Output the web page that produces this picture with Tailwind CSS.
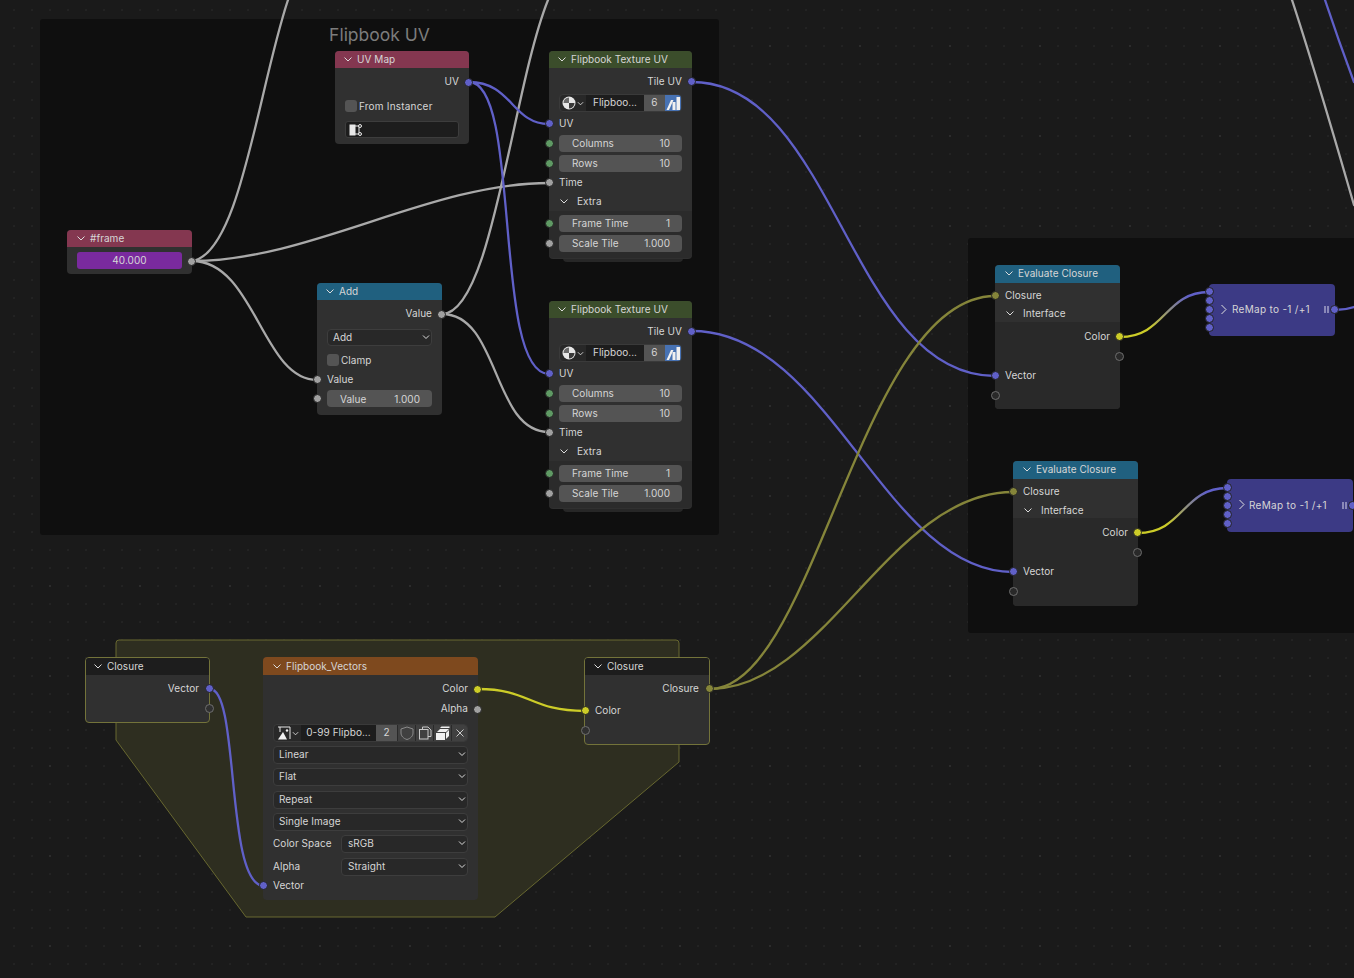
<!DOCTYPE html>
<html>
<head>
<meta charset="utf-8">
<script src="https://cdn.jsdelivr.net/npm/@tailwindcss/browser@4"></script>
</head>
<body class="bg-[#1a1a1a]">
<main class="relative w-[1354px] h-[978px] overflow-hidden bg-[#1a1a1a] [font-family:Inter,sans-serif] text-[10px] leading-none tracking-[0.05px] text-[#d6d6d6]">
  <div class="absolute inset-0 bg-[radial-gradient(#2c2c2c_1px,transparent_1.2px),radial-gradient(#232323_0.7px,transparent_0.9px)] bg-[size:90px_90px,18px_18px] bg-[position:5px_1px,5px_1px]"></div>

  <!-- frames -->
  <section class="absolute left-[40px] top-[19px] w-[679px] h-[516px] rounded-[3px] bg-[#0f0f0f]">
    <h2 class="text-center text-[17.5px] tracking-normal text-[#7c7c7c] pt-[7px]">Flipbook UV</h2>
  </section>
  <section class="absolute left-[968px] top-[238px] w-[400px] h-[395px] rounded-[3px] bg-[#0f0f0f]"></section>

  <!-- zone + wires -->
  <svg class="absolute inset-0" width="1354" height="978" viewBox="0 0 1354 978" fill="none">
    <defs>
      <linearGradient id="g1" gradientUnits="userSpaceOnUse" x1="1120" y1="337" x2="1209" y2="292"><stop offset="0.3" stop-color="#cccc28"/><stop offset="0.55" stop-color="#8f8f80"/><stop offset="0.8" stop-color="#6060c8"/></linearGradient>
      <linearGradient id="g2" gradientUnits="userSpaceOnUse" x1="1138" y1="533" x2="1227" y2="488"><stop offset="0.3" stop-color="#cccc28"/><stop offset="0.55" stop-color="#8f8f80"/><stop offset="0.8" stop-color="#6060c8"/></linearGradient>
    </defs>
    <path d="M119 640H676Q679 640 679 643V762L495 917H246L116 740V643Q116 640 119 640Z" fill="#2e2e20" stroke="#686830" stroke-width="1"/>
    <g stroke-width="2.300" stroke-linecap="round">
      <g stroke="#a9a9a9">
        <path d="M192 261C240 254 258 90 288 0"/>
        <path d="M192 261C310 261 430 183 549 183"/>
        <path d="M192 261C255 261 262 380 317 380"/>
        <path d="M442 314C492 314 512 90 548 0"/>
        <path d="M442 314C500 314 492 432 549 432"/>
        <path d="M1292 0C1315 70 1335 140 1354 205"/>
      </g>
      <g stroke="#6060c8">
        <path d="M469 82C512 82 512 124 549 124"/>
        <path d="M469 82C522 82 492 374 549 374"/>
        <path d="M692 82C835 82 850 376 995 376"/>
        <path d="M692 331C830 331 885 572 1013 572"/>
        <path d="M210 689C240 689 225 886 264 886"/>
        <path d="M1325 0C1335 30 1345 58 1354 82"/>
        <path d="M1335 310C1342 310 1348 309 1354 307"/>
      </g>
      <g stroke="#85853a">
        <path d="M710 689C815 689 860 296 995 296"/>
        <path d="M710 689C825 689 890 492 1013 492"/>
      </g>
      <path d="M478 689C530 689 530 711 585 711" stroke="#cccc28"/>
      <path d="M1120 337C1165 337 1165 292 1209 292" stroke="url(#g1)"/>
      <path d="M1138 533C1183 533 1183 488 1227 488" stroke="url(#g2)"/>
    </g>
  </svg>

  <!-- #frame -->
  <article class="absolute left-[67px] top-[230px] w-[125px] h-[44px] rounded-[4px] bg-[#303030]">
    <header class="flex items-center gap-[4px] h-[17px] pb-[2px] pl-[9px] rounded-t-[4px] bg-[#843750]">
      <svg width="10" height="10" viewBox="0 0 10 10" fill="none" stroke="#dcdcdc"><path d="M1.5 3.5 5 7l3.5-3.5"/></svg>#frame
    </header>
    <div class="relative mx-[10px] mt-[5px] h-[17px] pb-[2px] flex items-center justify-center rounded-[3px] bg-[#7a2a9e]">40.000</div>
    <span class="absolute right-[-4px] top-[27px] w-[9px] h-[9px] rounded-full bg-[#a1a1a1] border border-[#222]"></span>
  </article>

  <!-- UV Map -->
  <article class="absolute left-[335px] top-[51px] w-[134px] h-[93px] rounded-[4px] bg-[#303030]">
    <header class="flex items-center gap-[4px] h-[17px] pb-[2px] pl-[8px] rounded-t-[4px] bg-[#843750]">
      <svg width="10" height="10" viewBox="0 0 10 10" fill="none" stroke="#dcdcdc"><path d="M1.5 3.5 5 7l3.5-3.5"/></svg>UV Map
    </header>
    <div class="relative h-[20px] mt-[4px] pb-[2px] flex items-center justify-end pr-[10px]">UV<span class="absolute right-[-4px] top-[6px] w-[9px] h-[9px] rounded-full bg-[#6060c8] border border-[#222]"></span></div>
    <div class="flex items-center gap-[2px] h-[18px] mt-[5px] pl-[10px] tracking-[0.2px]"><span class="w-[12px] h-[12px] rounded-[3px] bg-[#545454]"></span>From Instancer</div>
    <div class="flex items-center mx-[10px] mt-[6px] h-[17px] pl-[3px] rounded-[3px] bg-[#1d1d1d] border border-[#3d3d3d]">
      <svg width="14" height="14" viewBox="0 0 14 14" fill="none" stroke="#e8e8e8"><path d="M2 3h8M10 3v8M2 11h8"/><rect x="1" y="2" width="5" height="10" fill="#e8e8e8"/><circle cx="11" cy="3" r="1.5" fill="#303030"/><circle cx="11" cy="11" r="1.5" fill="#303030"/></svg>
    </div>
  </article>

  <!-- Flipbook Texture UV 1 -->
  <article class="absolute left-[549px] top-[51px] w-[143px] h-[211px]">
    <div class="absolute left-[14px] right-[9px] top-[200px] h-[11px] rounded-[4px] bg-[#272727]"></div>
    <div class="relative h-[208px] rounded-[4px] bg-[#303030]">
      <header class="flex items-center gap-[4px] h-[17px] pb-[2px] pl-[8px] rounded-t-[4px] bg-[#3b4d2b]">
        <svg width="10" height="10" viewBox="0 0 10 10" fill="none" stroke="#dcdcdc"><path d="M1.5 3.5 5 7l3.5-3.5"/></svg>Flipbook Texture UV
      </header>
      <div class="relative h-[20px] mt-[3px] flex items-center justify-end pr-[10px]">Tile UV<span class="absolute right-[-4px] top-[6px] w-[9px] h-[9px] rounded-full bg-[#6060c8] border border-[#222]"></span></div>
      <div class="flex items-center mx-[10px] mt-[3px] h-[18px] rounded-[4px] overflow-hidden bg-[#282828] border border-[#3a3a3a]">
        <span class="flex items-center justify-center gap-[1px] w-[26px] h-full">
          <svg width="14" height="14" viewBox="0 0 14 14"><circle cx="7" cy="7" r="6.500" fill="#e6e6e6"/><path d="M7 1.500A5.500 5.500 0 0 0 1.500 7H7Z" fill="#6a6a6a"/><path d="M7 7H12.500A5.500 5.500 0 0 1 7 12.500Z" fill="#3a3a3a"/></svg>
          <svg width="7" height="7" viewBox="0 0 8 8" fill="none" stroke="#dcdcdc"><path d="M1 2.5 4 5.5l3-3"/></svg>
        </span>
        <span class="flex items-center justify-center w-[58px] h-full pb-[2px] bg-[#1d1d1d]">Flipboo...</span>
        <span class="flex items-center justify-center w-[21px] h-full pb-[2px] bg-[#545454]">6</span>
        <span class="flex items-center justify-center flex-1 h-full bg-[#4772b3]">
          <svg width="16" height="16" viewBox="0 0 16 16" fill="#f0f0f0"><path d="M1.500 15 6 5H8.500L4 15Z"/><rect x="7.500" y="7" width="3" height="8"/><rect x="11.500" y="2" width="3.500" height="13"/></svg>
        </span>
      </div>
      <div class="relative h-[20px] mt-[1px] flex items-center pl-[10px]">UV<span class="absolute left-[-4px] top-[6px] w-[9px] h-[9px] rounded-full bg-[#6060c8] border border-[#222]"></span></div>
      <div class="relative h-[20px] flex items-center px-[10px]"><span class="flex justify-between items-center w-full h-[17px] pl-[13px] pr-[12px] rounded-[4px] bg-[#545454]"><span>Columns</span><span>10</span></span><span class="absolute left-[-4px] top-[6px] w-[9px] h-[9px] rounded-full bg-[#5f9a64] border border-[#222]"></span></div>
      <div class="relative h-[20px] flex items-center px-[10px]"><span class="flex justify-between items-center w-full h-[17px] pl-[13px] pr-[12px] rounded-[4px] bg-[#545454]"><span>Rows</span><span>10</span></span><span class="absolute left-[-4px] top-[6px] w-[9px] h-[9px] rounded-full bg-[#5f9a64] border border-[#222]"></span></div>
      <div class="relative h-[19px] pb-[2px] flex items-center pl-[10px]">Time<span class="absolute left-[-4px] top-[5px] w-[9px] h-[9px] rounded-full bg-[#a1a1a1] border border-[#222]"></span></div>
      <div class="flex items-center gap-[8px] h-[19px] pb-[2px] pl-[10px]"><svg width="10" height="10" viewBox="0 0 10 10" fill="none" stroke="#dcdcdc"><path d="M1.5 3.5 5 7l3.5-3.5"/></svg>Extra</div>
      <div class="h-[47px] pt-[2px] rounded-b-[4px] bg-[#2b2b2b]">
        <div class="relative h-[20px] flex items-center px-[10px]"><span class="flex justify-between items-center w-full h-[17px] pl-[13px] pr-[12px] rounded-[4px] bg-[#545454]"><span>Frame Time</span><span>1</span></span><span class="absolute left-[-4px] top-[6px] w-[9px] h-[9px] rounded-full bg-[#5f9a64] border border-[#222]"></span></div>
        <div class="relative h-[20px] flex items-center px-[10px]"><span class="flex justify-between items-center w-full h-[17px] pl-[13px] pr-[12px] rounded-[4px] bg-[#545454]"><span>Scale Tile</span><span>1.000</span></span><span class="absolute left-[-4px] top-[6px] w-[9px] h-[9px] rounded-full bg-[#a1a1a1] border border-[#222]"></span></div>
      </div>
    </div>
  </article>

  <!-- Flipbook Texture UV 2 -->
  <article class="absolute left-[549px] top-[301px] w-[143px] h-[211px]">
    <div class="absolute left-[14px] right-[9px] top-[200px] h-[11px] rounded-[4px] bg-[#272727]"></div>
    <div class="relative h-[208px] rounded-[4px] bg-[#303030]">
      <header class="flex items-center gap-[4px] h-[17px] pb-[2px] pl-[8px] rounded-t-[4px] bg-[#3b4d2b]">
        <svg width="10" height="10" viewBox="0 0 10 10" fill="none" stroke="#dcdcdc"><path d="M1.5 3.5 5 7l3.5-3.5"/></svg>Flipbook Texture UV
      </header>
      <div class="relative h-[20px] mt-[3px] flex items-center justify-end pr-[10px]">Tile UV<span class="absolute right-[-4px] top-[6px] w-[9px] h-[9px] rounded-full bg-[#6060c8] border border-[#222]"></span></div>
      <div class="flex items-center mx-[10px] mt-[3px] h-[18px] rounded-[4px] overflow-hidden bg-[#282828] border border-[#3a3a3a]">
        <span class="flex items-center justify-center gap-[1px] w-[26px] h-full">
          <svg width="14" height="14" viewBox="0 0 14 14"><circle cx="7" cy="7" r="6.500" fill="#e6e6e6"/><path d="M7 1.500A5.500 5.500 0 0 0 1.500 7H7Z" fill="#6a6a6a"/><path d="M7 7H12.500A5.500 5.500 0 0 1 7 12.500Z" fill="#3a3a3a"/></svg>
          <svg width="7" height="7" viewBox="0 0 8 8" fill="none" stroke="#dcdcdc"><path d="M1 2.5 4 5.5l3-3"/></svg>
        </span>
        <span class="flex items-center justify-center w-[58px] h-full pb-[2px] bg-[#1d1d1d]">Flipboo...</span>
        <span class="flex items-center justify-center w-[21px] h-full pb-[2px] bg-[#545454]">6</span>
        <span class="flex items-center justify-center flex-1 h-full bg-[#4772b3]">
          <svg width="16" height="16" viewBox="0 0 16 16" fill="#f0f0f0"><path d="M1.500 15 6 5H8.500L4 15Z"/><rect x="7.500" y="7" width="3" height="8"/><rect x="11.500" y="2" width="3.500" height="13"/></svg>
        </span>
      </div>
      <div class="relative h-[20px] mt-[1px] flex items-center pl-[10px]">UV<span class="absolute left-[-4px] top-[6px] w-[9px] h-[9px] rounded-full bg-[#6060c8] border border-[#222]"></span></div>
      <div class="relative h-[20px] flex items-center px-[10px]"><span class="flex justify-between items-center w-full h-[17px] pl-[13px] pr-[12px] rounded-[4px] bg-[#545454]"><span>Columns</span><span>10</span></span><span class="absolute left-[-4px] top-[6px] w-[9px] h-[9px] rounded-full bg-[#5f9a64] border border-[#222]"></span></div>
      <div class="relative h-[20px] flex items-center px-[10px]"><span class="flex justify-between items-center w-full h-[17px] pl-[13px] pr-[12px] rounded-[4px] bg-[#545454]"><span>Rows</span><span>10</span></span><span class="absolute left-[-4px] top-[6px] w-[9px] h-[9px] rounded-full bg-[#5f9a64] border border-[#222]"></span></div>
      <div class="relative h-[19px] pb-[2px] flex items-center pl-[10px]">Time<span class="absolute left-[-4px] top-[5px] w-[9px] h-[9px] rounded-full bg-[#a1a1a1] border border-[#222]"></span></div>
      <div class="flex items-center gap-[8px] h-[19px] pb-[2px] pl-[10px]"><svg width="10" height="10" viewBox="0 0 10 10" fill="none" stroke="#dcdcdc"><path d="M1.5 3.5 5 7l3.5-3.5"/></svg>Extra</div>
      <div class="h-[47px] pt-[2px] rounded-b-[4px] bg-[#2b2b2b]">
        <div class="relative h-[20px] flex items-center px-[10px]"><span class="flex justify-between items-center w-full h-[17px] pl-[13px] pr-[12px] rounded-[4px] bg-[#545454]"><span>Frame Time</span><span>1</span></span><span class="absolute left-[-4px] top-[6px] w-[9px] h-[9px] rounded-full bg-[#5f9a64] border border-[#222]"></span></div>
        <div class="relative h-[20px] flex items-center px-[10px]"><span class="flex justify-between items-center w-full h-[17px] pl-[13px] pr-[12px] rounded-[4px] bg-[#545454]"><span>Scale Tile</span><span>1.000</span></span><span class="absolute left-[-4px] top-[6px] w-[9px] h-[9px] rounded-full bg-[#a1a1a1] border border-[#222]"></span></div>
      </div>
    </div>
  </article>

  <!-- Add -->
  <article class="absolute left-[317px] top-[283px] w-[125px] h-[132px] rounded-[4px] bg-[#303030]">
    <header class="flex items-center gap-[4px] h-[17px] pb-[2px] pl-[8px] rounded-t-[4px] bg-[#20607f]">
      <svg width="10" height="10" viewBox="0 0 10 10" fill="none" stroke="#dcdcdc"><path d="M1.5 3.5 5 7l3.5-3.5"/></svg>Add
    </header>
    <div class="relative h-[20px] mt-[4px] pb-[2px] flex items-center justify-end pr-[10px]">Value<span class="absolute right-[-4px] top-[6px] w-[9px] h-[9px] rounded-full bg-[#a1a1a1] border border-[#222]"></span></div>
    <div class="flex items-center justify-between mx-[10px] mt-[5px] h-[17px] pb-[2px] pl-[5px] pr-[1px] rounded-[4px] bg-[#282828] border border-[#3d3d3d]">Add<svg width="8" height="8" viewBox="0 0 8 8" fill="none" stroke="#dcdcdc"><path d="M1 2.5 4 5.5l3-3"/></svg></div>
    <div class="flex items-center gap-[2px] h-[18px] mt-[5px] pl-[10px]"><span class="w-[12px] h-[12px] rounded-[3px] bg-[#545454]"></span>Clamp</div>
    <div class="relative h-[20px] flex items-center pl-[10px]">Value<span class="absolute left-[-4px] top-[6px] w-[9px] h-[9px] rounded-full bg-[#a1a1a1] border border-[#222]"></span></div>
    <div class="relative h-[19px] flex items-center px-[10px]"><span class="flex justify-between items-center w-full h-[17px] pl-[13px] pr-[12px] rounded-[4px] bg-[#545454]"><span>Value</span><span>1.000</span></span><span class="absolute left-[-4px] top-[5px] w-[9px] h-[9px] rounded-full bg-[#a1a1a1] border border-[#222]"></span></div>
  </article>

  <!-- Closure input -->
  <article class="absolute left-[85px] top-[657px] w-[125px] h-[66px] rounded-[4px] bg-[#303030] border border-[#73733a]">
    <header class="flex items-center gap-[4px] h-[17px] pb-[2px] pl-[7px] rounded-t-[3px] bg-[#1d1d1d]">
      <svg width="10" height="10" viewBox="0 0 10 10" fill="none" stroke="#dcdcdc"><path d="M1.5 3.5 5 7l3.5-3.5"/></svg>Closure
    </header>
    <div class="relative h-[20px] mt-[3px] flex items-center justify-end pr-[10px]">Vector<span class="absolute right-[-5px] top-[6px] w-[9px] h-[9px] rounded-full bg-[#6060c8] border border-[#222]"></span></div>
    <div class="relative h-[20px]"><span class="absolute right-[-5px] top-[6px] w-[9px] h-[9px] rounded-full bg-[#303030] border border-[#6e6e6e]"></span></div>
  </article>

  <!-- Flipbook_Vectors -->
  <article class="absolute left-[263px] top-[657px] w-[215px] h-[243px] rounded-[4px] bg-[#303030]">
    <header class="flex items-center gap-[4px] h-[18px] pl-[9px] rounded-t-[4px] bg-[#7e491e]">
      <svg width="10" height="10" viewBox="0 0 10 10" fill="none" stroke="#dcdcdc"><path d="M1.5 3.5 5 7l3.5-3.5"/></svg>Flipbook_Vectors
    </header>
    <div class="relative h-[20px] mt-[4px] pb-[2px] flex items-center justify-end pr-[10px]">Color<span class="absolute right-[-4px] top-[6px] w-[9px] h-[9px] rounded-full bg-[#cccc28] border border-[#222]"></span></div>
    <div class="relative h-[20px] pb-[2px] flex items-center justify-end pr-[10px]">Alpha<span class="absolute right-[-4px] top-[6px] w-[9px] h-[9px] rounded-full bg-[#a1a1a1] border border-[#222]"></span></div>
    <div class="flex items-center mx-[10px] mt-[5px] h-[18px] rounded-[4px] overflow-hidden bg-[#282828] border border-[#3a3a3a]">
      <span class="flex items-center justify-center gap-[1px] w-[27px] h-full">
        <svg width="14" height="14" viewBox="0 0 14 14" fill="none"><path d="M3 1H13V13" stroke="#e6e6e6"/><path d="M1 13.500 6 6l4 7.500Z" fill="#f0f0f0"/><circle cx="10" cy="4.500" r="1.200" fill="#f0f0f0"/><path d="M1 1H3V6" stroke="#e6e6e6"/></svg>
        <svg width="7" height="7" viewBox="0 0 8 8" fill="none" stroke="#dcdcdc"><path d="M1 2.5 4 5.5l3-3"/></svg>
      </span>
      <span class="flex items-center justify-center w-[75px] h-full pb-[2px] bg-[#1d1d1d]">0-99 Flipbo...</span>
      <span class="flex items-center justify-center w-[21px] h-full pb-[2px] bg-[#545454]">2</span>
      <span class="flex items-center justify-center w-[18px] h-full bg-[#404040] border-l border-[#2a2a2a]"><svg width="14" height="14" viewBox="0 0 14 14" fill="none" stroke="#8a8a8a"><path d="M7 1 13 3V7C13 10 10.500 12.500 7 13.500 3.500 12.500 1 10 1 7V3Z"/></svg></span>
      <span class="flex items-center justify-center w-[18px] h-full bg-[#404040] border-l border-[#2a2a2a]"><svg width="14" height="14" viewBox="0 0 14 14" fill="none" stroke="#c8c8c8"><path d="M4.500 3.500V1H10L13 4V10.500H10"/><rect x="1.500" y="3.500" width="8.500" height="9.500"/></svg></span>
      <span class="flex items-center justify-center w-[18px] h-full bg-[#404040] border-l border-[#2a2a2a]"><svg width="15" height="15" viewBox="0 0 15 15" fill="#f0f0f0"><path d="M1 7H10V14H1Z"/><path d="M2 6 5 3H14L11 6Z"/><path d="M5 2 6.500 .5H14.500V2Z"/><path d="M11 7 14 4V10L11 13Z"/></svg></span>
      <span class="flex items-center justify-center flex-1 h-full bg-[#404040] border-l border-[#2a2a2a]"><svg width="10" height="10" viewBox="0 0 10 10" fill="none" stroke="#c8c8c8"><path d="M1.500 1.500 8.500 8.500M8.500 1.500 1.500 8.500"/></svg></span>
    </div>
    <div class="flex items-center justify-between mx-[10px] mt-[4px] h-[18px] pb-[2px] pl-[5px] pr-[1px] rounded-[4px] bg-[#282828] border border-[#3d3d3d]">Linear<svg width="8" height="8" viewBox="0 0 8 8" fill="none" stroke="#dcdcdc"><path d="M1 2.5 4 5.5l3-3"/></svg></div>
    <div class="flex items-center justify-between mx-[10px] mt-[4px] h-[18px] pb-[2px] pl-[5px] pr-[1px] rounded-[4px] bg-[#282828] border border-[#3d3d3d]">Flat<svg width="8" height="8" viewBox="0 0 8 8" fill="none" stroke="#dcdcdc"><path d="M1 2.5 4 5.5l3-3"/></svg></div>
    <div class="flex items-center justify-between mx-[10px] mt-[5px] h-[18px] pb-[2px] pl-[5px] pr-[1px] rounded-[4px] bg-[#282828] border border-[#3d3d3d]">Repeat<svg width="8" height="8" viewBox="0 0 8 8" fill="none" stroke="#dcdcdc"><path d="M1 2.5 4 5.5l3-3"/></svg></div>
    <div class="flex items-center justify-between mx-[10px] mt-[4px] h-[18px] pb-[2px] pl-[5px] pr-[1px] rounded-[4px] bg-[#282828] border border-[#3d3d3d]">Single Image<svg width="8" height="8" viewBox="0 0 8 8" fill="none" stroke="#dcdcdc"><path d="M1 2.5 4 5.5l3-3"/></svg></div>
    <div class="flex items-center mx-[10px] mt-[4px] h-[18px]"><span class="w-[68px] pb-[2px]">Color Space</span><span class="flex items-center justify-between flex-1 h-full pb-[2px] pl-[6px] pr-[1px] rounded-[4px] bg-[#282828] border border-[#3d3d3d]">sRGB<svg width="8" height="8" viewBox="0 0 8 8" fill="none" stroke="#dcdcdc"><path d="M1 2.500 4 5.500l3-3"/></svg></span></div>
    <div class="flex items-center mx-[10px] mt-[5px] h-[18px]"><span class="w-[68px] pb-[2px]">Alpha</span><span class="flex items-center justify-between flex-1 h-full pb-[2px] pl-[6px] pr-[1px] rounded-[4px] bg-[#282828] border border-[#3d3d3d]">Straight<svg width="8" height="8" viewBox="0 0 8 8" fill="none" stroke="#dcdcdc"><path d="M1 2.500 4 5.500l3-3"/></svg></span></div>
    <div class="relative h-[19px] pb-[2px] flex items-center pl-[10px]">Vector<span class="absolute left-[-4px] top-[5px] w-[9px] h-[9px] rounded-full bg-[#6060c8] border border-[#222]"></span></div>
  </article>

  <!-- Closure output -->
  <article class="absolute left-[584px] top-[657px] w-[126px] h-[88px] rounded-[4px] bg-[#303030] border border-[#73733a]">
    <header class="flex items-center gap-[4px] h-[17px] pb-[2px] pl-[8px] rounded-t-[3px] bg-[#1d1d1d]">
      <svg width="10" height="10" viewBox="0 0 10 10" fill="none" stroke="#dcdcdc"><path d="M1.5 3.5 5 7l3.5-3.5"/></svg>Closure
    </header>
    <div class="relative h-[20px] mt-[3px] flex items-center justify-end pr-[10px]">Closure<span class="absolute right-[-5px] top-[6px] w-[9px] h-[9px] rounded-full bg-[#85853a] border border-[#222]"></span></div>
    <div class="relative h-[20px] mt-[2px] flex items-center pl-[10px]">Color<span class="absolute left-[-4px] top-[6px] w-[9px] h-[9px] rounded-full bg-[#cccc28] border border-[#222]"></span></div>
    <div class="relative h-[20px]"><span class="absolute left-[-4px] top-[6px] w-[9px] h-[9px] rounded-full bg-[#303030] border border-[#6e6e6e]"></span></div>
  </article>

  <!-- Evaluate Closure 1 -->
  <article class="absolute left-[995px] top-[265px] w-[125px] h-[144px] rounded-[4px] bg-[#303030]">
    <header class="flex items-center gap-[4px] h-[18px] pb-[2px] pl-[9px] rounded-t-[4px] bg-[#20607f]">
      <svg width="10" height="10" viewBox="0 0 10 10" fill="none" stroke="#dcdcdc"><path d="M1.5 3.5 5 7l3.5-3.5"/></svg>Evaluate Closure
    </header>
    <div class="relative h-[20px] mt-[2px] flex items-center pl-[10px]">Closure<span class="absolute left-[-4px] top-[6px] w-[9px] h-[9px] rounded-full bg-[#85853a] border border-[#222]"></span></div>
    <div class="flex items-center gap-[8px] h-[17px] pb-[2px] pl-[10px]"><svg width="10" height="10" viewBox="0 0 10 10" fill="none" stroke="#dcdcdc"><path d="M1.5 3.5 5 7l3.5-3.5"/></svg>Interface</div>
    <div class="h-[87px] pt-[4px] rounded-b-[4px] bg-[#292929]">
      <div class="relative h-[20px] flex items-center justify-end pr-[10px]">Color<span class="absolute right-[-4px] top-[6px] w-[9px] h-[9px] rounded-full bg-[#cccc28] border border-[#222]"></span></div>
      <div class="relative h-[20px]"><span class="absolute right-[-4px] top-[6px] w-[9px] h-[9px] rounded-full bg-[#292929] border border-[#6e6e6e]"></span></div>
      <div class="relative h-[19px] pb-[2px] flex items-center pl-[10px]">Vector<span class="absolute left-[-4px] top-[5px] w-[9px] h-[9px] rounded-full bg-[#6060c8] border border-[#222]"></span></div>
      <div class="relative h-[20px]"><span class="absolute left-[-4px] top-[6px] w-[9px] h-[9px] rounded-full bg-[#292929] border border-[#6e6e6e]"></span></div>
    </div>
  </article>

  <!-- Evaluate Closure 2 -->
  <article class="absolute left-[1013px] top-[461px] w-[125px] h-[145px] rounded-[4px] bg-[#303030]">
    <header class="flex items-center gap-[4px] h-[18px] pb-[2px] pl-[9px] rounded-t-[4px] bg-[#20607f]">
      <svg width="10" height="10" viewBox="0 0 10 10" fill="none" stroke="#dcdcdc"><path d="M1.5 3.5 5 7l3.5-3.5"/></svg>Evaluate Closure
    </header>
    <div class="relative h-[20px] mt-[2px] flex items-center pl-[10px]">Closure<span class="absolute left-[-4px] top-[6px] w-[9px] h-[9px] rounded-full bg-[#85853a] border border-[#222]"></span></div>
    <div class="flex items-center gap-[8px] h-[17px] pl-[10px]"><svg width="10" height="10" viewBox="0 0 10 10" fill="none" stroke="#dcdcdc"><path d="M1.5 3.5 5 7l3.5-3.5"/></svg>Interface</div>
    <div class="h-[88px] pt-[4px] rounded-b-[4px] bg-[#292929]">
      <div class="relative h-[20px] flex items-center justify-end pr-[10px]">Color<span class="absolute right-[-4px] top-[6px] w-[9px] h-[9px] rounded-full bg-[#cccc28] border border-[#222]"></span></div>
      <div class="relative h-[20px]"><span class="absolute right-[-4px] top-[6px] w-[9px] h-[9px] rounded-full bg-[#292929] border border-[#6e6e6e]"></span></div>
      <div class="relative h-[19px] pb-[2px] flex items-center pl-[10px]">Vector<span class="absolute left-[-4px] top-[5px] w-[9px] h-[9px] rounded-full bg-[#6060c8] border border-[#222]"></span></div>
      <div class="relative h-[20px]"><span class="absolute left-[-4px] top-[6px] w-[9px] h-[9px] rounded-full bg-[#292929] border border-[#6e6e6e]"></span></div>
    </div>
  </article>

  <!-- ReMap 1 -->
  <article class="absolute left-[1209px] top-[284px] w-[126px] h-[52px] rounded-[4px] bg-[#3c3a85] flex items-center pl-[11px] pb-[2px] tracking-[0.3px]">
    <svg width="8" height="11" viewBox="0 0 8 11" fill="none" stroke="#e0e0e0" class="mr-[4px]"><path d="M1.500 1 6 5.500 1.500 10"/></svg>ReMap to -1 /+1
    <span class="absolute right-[6px] top-[22px] flex gap-[1px]"><i class="block w-[2px] h-[7px] bg-[#8a88b8]"></i><i class="block w-[2px] h-[7px] bg-[#8a88b8]"></i></span>
    <span class="absolute left-[-4px] top-[3px] w-[9px] h-[9px] rounded-full bg-[#6060c8] border border-[#222]"></span>
    <span class="absolute left-[-4px] top-[12px] w-[9px] h-[9px] rounded-full bg-[#6060c8] border border-[#222]"></span>
    <span class="absolute left-[-4px] top-[21px] w-[9px] h-[9px] rounded-full bg-[#6060c8] border border-[#222]"></span>
    <span class="absolute left-[-4px] top-[30px] w-[9px] h-[9px] rounded-full bg-[#6060c8] border border-[#222]"></span>
    <span class="absolute left-[-4px] top-[39px] w-[9px] h-[9px] rounded-full bg-[#6060c8] border border-[#222]"></span>
    <span class="absolute right-[-4px] top-[21px] w-[9px] h-[9px] rounded-full bg-[#6060c8] border border-[#222]"></span>
  </article>

  <!-- ReMap 2 -->
  <article class="absolute left-[1227px] top-[479px] w-[126px] h-[53px] rounded-[4px] bg-[#3c3a85] flex items-center pl-[11px] pb-[2px] tracking-[0.3px]">
    <svg width="8" height="11" viewBox="0 0 8 11" fill="none" stroke="#e0e0e0" class="mr-[3px]"><path d="M1.500 1 6 5.500 1.500 10"/></svg>ReMap to -1 /+1
    <span class="absolute right-[6px] top-[23px] flex gap-[1px]"><i class="block w-[2px] h-[7px] bg-[#8a88b8]"></i><i class="block w-[2px] h-[7px] bg-[#8a88b8]"></i></span>
    <span class="absolute left-[-4px] top-[4px] w-[9px] h-[9px] rounded-full bg-[#6060c8] border border-[#222]"></span>
    <span class="absolute left-[-4px] top-[13px] w-[9px] h-[9px] rounded-full bg-[#6060c8] border border-[#222]"></span>
    <span class="absolute left-[-4px] top-[22px] w-[9px] h-[9px] rounded-full bg-[#6060c8] border border-[#222]"></span>
    <span class="absolute left-[-4px] top-[31px] w-[9px] h-[9px] rounded-full bg-[#6060c8] border border-[#222]"></span>
    <span class="absolute left-[-4px] top-[40px] w-[9px] h-[9px] rounded-full bg-[#6060c8] border border-[#222]"></span>
    <span class="absolute right-[-4px] top-[22px] w-[9px] h-[9px] rounded-full bg-[#6060c8] border border-[#222]"></span>
  </article>
</main>
</body>
</html>
